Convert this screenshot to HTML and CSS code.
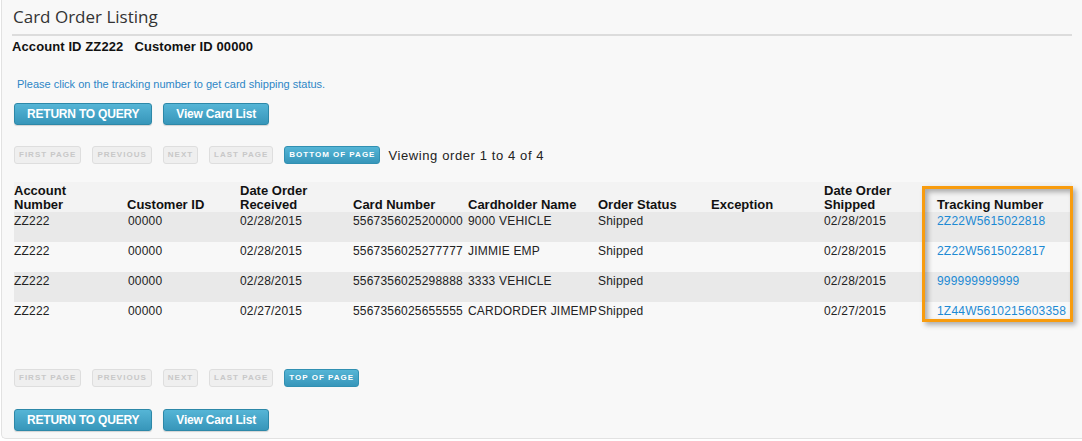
FILE: index.html
```html
<!DOCTYPE html>
<html>
<head>
<meta charset="utf-8">
<link rel="stylesheet" href="styles.css">
</head>
<body>
<div class="panel">
  <h1 class="title">Card Order Listing</h1>
  <div class="ids"><span>Account ID ZZ222</span><span class="cust">Customer ID 00000</span></div>
  <p class="info">Please click on the tracking number to get card shipping status.</p>
  <div class="actions">
    <button class="btn">RETURN TO QUERY</button>
    <button class="btn">View Card List</button>
  </div>
  <div class="pager">
    <span class="pg disabled">FIRST PAGE</span>
    <span class="pg disabled">PREVIOUS</span>
    <span class="pg disabled">NEXT</span>
    <span class="pg disabled">LAST PAGE</span>
    <span class="pg active">BOTTOM OF PAGE</span>
    <span class="viewing">Viewing order 1 to 4 of 4</span>
  </div>
  <div class="table-wrap">
    <table class="orders">
      <colgroup>
        <col class="c1"><col class="c2"><col class="c3"><col class="c4"><col class="c5"><col class="c6"><col class="c7"><col class="c8"><col class="c9">
      </colgroup>
      <thead>
        <tr>
          <th>Account<br>Number</th>
          <th>Customer ID</th>
          <th>Date Order<br>Received</th>
          <th>Card Number</th>
          <th>Cardholder Name</th>
          <th>Order Status</th>
          <th>Exception</th>
          <th>Date Order<br>Shipped</th>
          <th class="trk">Tracking Number</th>
        </tr>
      </thead>
      <tbody>
        <tr class="odd">
          <td>ZZ222</td><td class="cid">00000</td><td>02/28/2015</td><td>5567356025200000</td><td>9000 VEHICLE</td><td>Shipped</td><td></td><td>02/28/2015</td><td class="trk"><a href="#">2Z22W5615022818</a></td>
        </tr>
        <tr>
          <td>ZZ222</td><td class="cid">00000</td><td>02/28/2015</td><td>5567356025277777</td><td>JIMMIE EMP</td><td>Shipped</td><td></td><td>02/28/2015</td><td class="trk"><a href="#">2Z22W5615022817</a></td>
        </tr>
        <tr class="odd">
          <td>ZZ222</td><td class="cid">00000</td><td>02/28/2015</td><td>5567356025298888</td><td>3333 VEHICLE</td><td>Shipped</td><td></td><td>02/28/2015</td><td class="trk"><a href="#">999999999999</a></td>
        </tr>
        <tr>
          <td>ZZ222</td><td class="cid">00000</td><td>02/27/2015</td><td>5567356025655555</td><td>CARDORDER JIMEMP</td><td>Shipped</td><td></td><td>02/27/2015</td><td class="trk"><a href="#">1Z44W5610215603358</a></td>
        </tr>
      </tbody>
    </table>
    <div class="highlight"></div>
  </div>
  <div class="pager pager-bottom">
    <span class="pg disabled">FIRST PAGE</span>
    <span class="pg disabled">PREVIOUS</span>
    <span class="pg disabled">NEXT</span>
    <span class="pg disabled">LAST PAGE</span>
    <span class="pg active">TOP OF PAGE</span>
  </div>
  <div class="actions actions-bottom">
    <button class="btn">RETURN TO QUERY</button>
    <button class="btn">View Card List</button>
  </div>
</div>
</body>
</html>
```
FILE: styles.css
```css
html, body {
  margin: 0;
  padding: 0;
  background: #ffffff;
  overflow: hidden;
}
body {
  font-family: "Liberation Sans", Arial, sans-serif;
  color: #222;
}
.panel {
  margin-left: 1px;
  height: 439px;
  box-sizing: border-box;
  background: #f8f8f8;
  border-left: 1px solid #e2e2e2;
  border-bottom: 1px solid #e2e2e2;
  border-bottom-left-radius: 5px;
  padding: 0 10px 0 10px;
}
.title {
  margin: 0;
  padding: 5px 0 5px 1px;
  line-height: 24px;
  font-family: "Open Sans", "Liberation Sans", sans-serif;
  font-weight: 400;
  font-size: 17px;
  color: #333;
  border-bottom: 2px solid #dcdcdc;
}
.ids {
  margin-top: 3px;
  font-size: 13px;
  line-height: 16px;
  font-weight: bold;
  color: #111;
  letter-spacing: 0.1px;
}
.ids .cust { margin-left: 11px; }
.info {
  margin: 23px 0 0 5px;
  font-size: 11px;
  line-height: 13px;
  color: #2d86c6;
}
.actions {
  display: flex;
  gap: 11px;
  margin-top: 12px;
  padding-left: 2px;
}
.btn {
  height: 22px;
  padding: 0 12px;
  border: 1px solid #2d88a8;
  border-radius: 3px;
  background: linear-gradient(#55b5d6, #3796ba);
  color: #fff;
  font-family: "Liberation Sans", Arial, sans-serif;
  font-weight: bold;
  font-size: 12px;
  letter-spacing: -0.2px;
  line-height: 20px;
  box-shadow: 0 1px 1px rgba(0,0,0,0.15);
}
.pager {
  display: flex;
  align-items: center;
  gap: 11px;
  margin-top: 21px;
  padding-left: 2px;
  height: 18px;
}
.pg {
  height: 18px;
  box-sizing: border-box;
  padding: 0 4px;
  border-radius: 3px;
  font-size: 8px;
  font-weight: bold;
  letter-spacing: 1px;
  line-height: 16px;
}
.pg.disabled {
  background: #efefef;
  border: 1px solid #dedede;
  color: #c8c8c8;
}
.pg.active {
  background: linear-gradient(#55b5d6, #3796ba);
  border: 1px solid #3190b2;
  color: #fff;
}
.viewing {
  font-size: 13px;
  letter-spacing: 0.6px;
  color: #222;
  margin-left: -3px;
}
.table-wrap {
  position: relative;
  margin-top: 18px;
  padding-left: 2px;
}
.orders {
  border-collapse: collapse;
  table-layout: fixed;
  width: 1058px;
  font-size: 12px;
}
.c1, .c2, .c3, .c6, .c7, .c8 { width: 113px; }
.c4 { width: 115px; }
.c5 { width: 130px; }
.c9 { width: 135px; }
.orders th {
  text-align: left;
  vertical-align: bottom;
  font-size: 13px;
  line-height: 14px;
  font-weight: bold;
  color: #111;
  padding: 2px 0 0 0;
  height: 28px;
  background: #f3f3f3;
}
.orders td {
  vertical-align: top;
  height: 30px;
  padding: 2px 0 0 0;
  box-sizing: border-box;
  line-height: 14px;
  color: #222;
  white-space: nowrap;
  letter-spacing: 0.2px;
}
.orders td.cid { padding-left: 1px; }
.orders tbody tr.odd td { background: #e9e9e9; }
.orders a {
  color: #1c8ad4;
  text-decoration: none;
}
.highlight {
  position: absolute;
  left: 910px;
  top: 4px;
  width: 151px;
  height: 136px;
  box-sizing: border-box;
  border: 3px solid #f89c0e;
  box-shadow: inset 3px 3px 5px rgba(0,0,0,0.3), 3px 3px 5px rgba(0,0,0,0.3);
  pointer-events: none;
}
.pager-bottom { margin-top: 37px; }
.actions-bottom { margin-top: 22px; }
```
